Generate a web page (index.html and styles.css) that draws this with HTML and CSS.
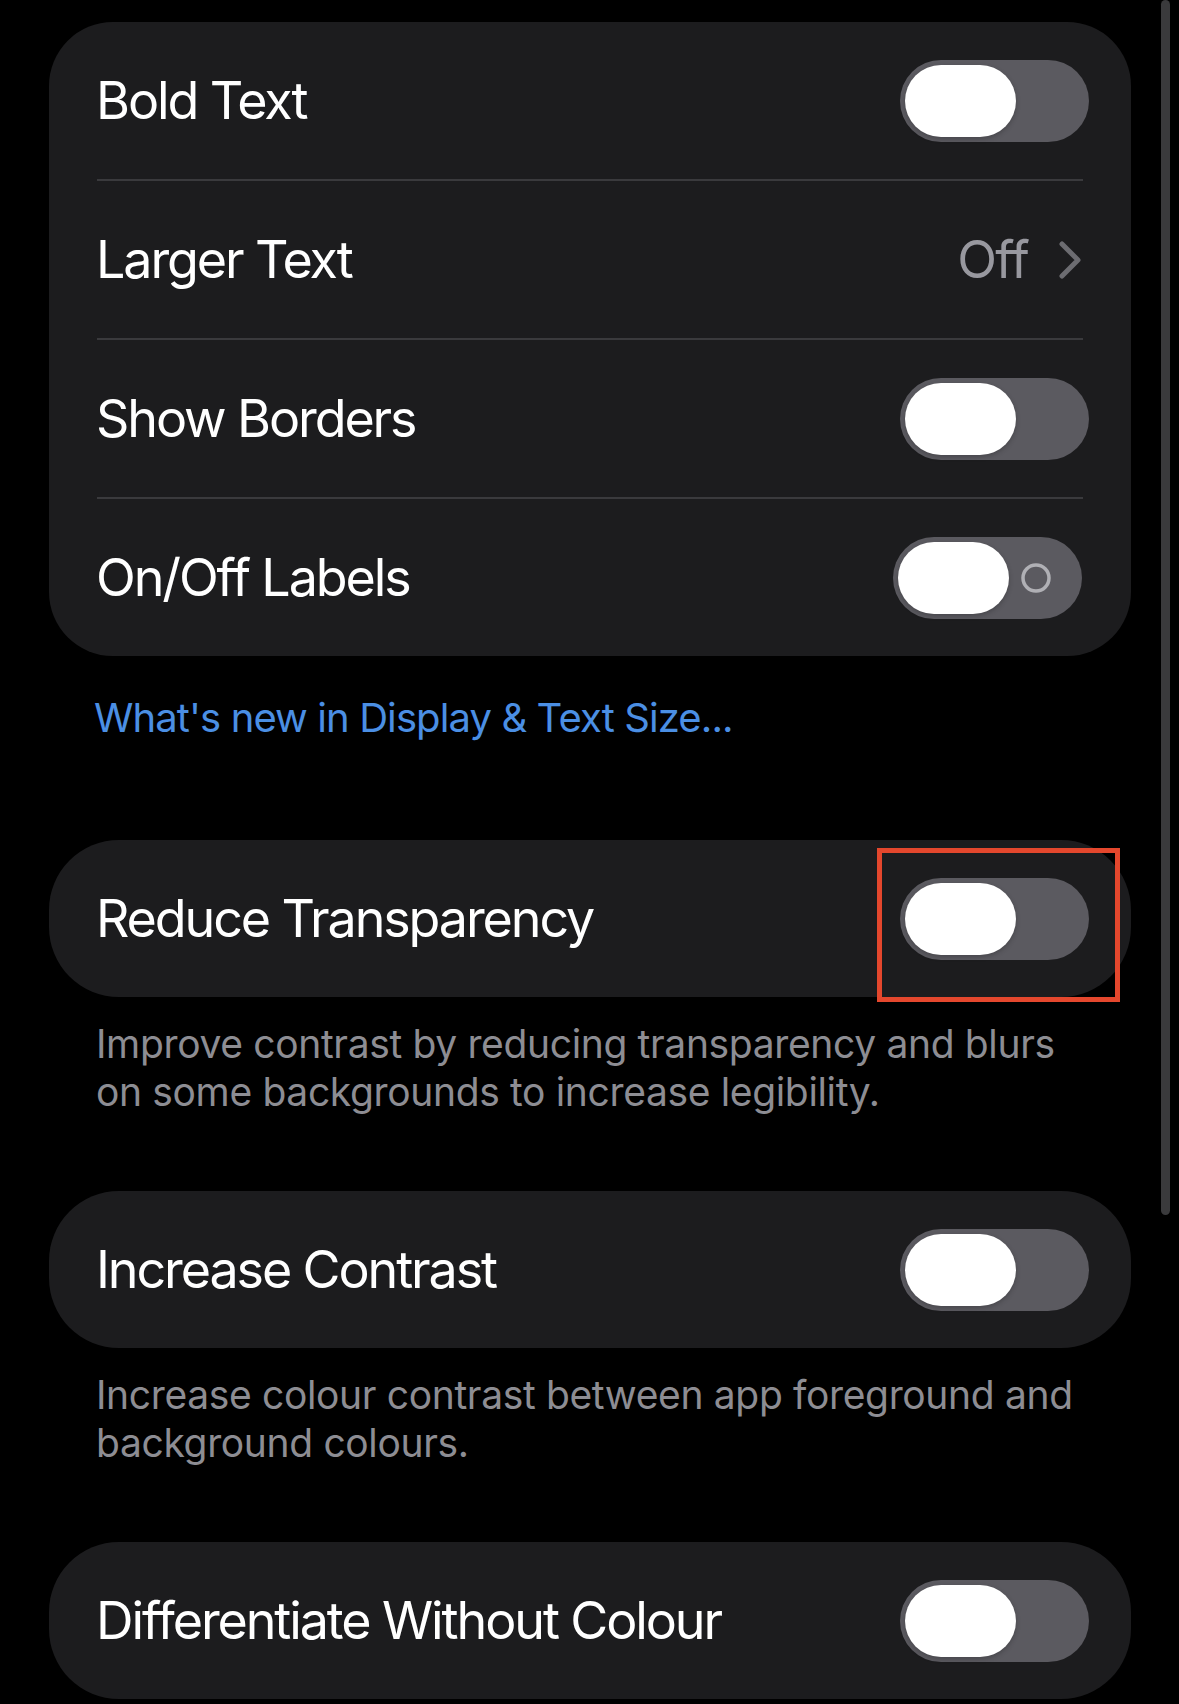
FILE: index.html
```html
<!DOCTYPE html>
<html lang="en">
<head>
<meta charset="utf-8">
<title>Display &amp; Text Size</title>
<link rel="stylesheet" href="styles.css">
</head>
<body>
<div class="screen">
  <div class="scrollbar"></div>
  <main class="page">
    <section class="card">
      <div class="row">
        <span class="label">Bold Text</span>
        <div class="toggle"><div class="knob"></div></div>
      </div>
      <div class="sep"></div>
      <div class="row">
        <span class="label">Larger Text</span>
        <div class="detail">
          <span class="value">Off</span>
          <svg class="chevron" width="22" height="38" viewBox="0 0 22 38"><polyline points="3,3 19,19 3,35" fill="none" stroke="#6c6c71" stroke-width="5" stroke-linecap="round" stroke-linejoin="round"/></svg>
        </div>
      </div>
      <div class="sep"></div>
      <div class="row">
        <span class="label">Show Borders</span>
        <div class="toggle"><div class="knob"></div></div>
      </div>
      <div class="sep"></div>
      <div class="row">
        <span class="label">On/Off Labels</span>
        <div class="toggle toggle-labels"><div class="knob"></div>
          <svg class="off-label" width="34" height="34" viewBox="0 0 34 34"><circle cx="17" cy="17" r="13" fill="none" stroke="#b0b0b5" stroke-width="3.5"/></svg>
        </div>
      </div>
    </section>

    <p class="link">What's new in Display &amp; Text Size...</p>

    <section class="card card-single highlighted">
      <div class="row">
        <span class="label">Reduce Transparency</span>
        <div class="toggle"><div class="knob"></div></div>
      </div>
      <div class="annotation"></div>
    </section>
    <p class="footnote">Improve contrast by reducing transparency and blurs on some backgrounds to increase legibility.</p>

    <section class="card card-single">
      <div class="row">
        <span class="label">Increase Contrast</span>
        <div class="toggle"><div class="knob"></div></div>
      </div>
    </section>
    <p class="footnote">Increase colour contrast between app foreground and background colours.</p>

    <section class="card card-single">
      <div class="row">
        <span class="label">Differentiate Without Colour</span>
        <div class="toggle"><div class="knob"></div></div>
      </div>
    </section>
  </main>
</div>
</body>
</html>
```

FILE: styles.css
```css
* { box-sizing: border-box; }

html, body {
  margin: 0;
  padding: 0;
  background: #000;
}

body {
  font-family: Inter, "Noto Sans", "Liberation Sans", sans-serif;
  color: #fff;
  width: 1179px;
  height: 1704px;
  overflow: hidden;
}

.screen {
  position: relative;
  width: 1179px;
  height: 1704px;
}

.scrollbar {
  position: absolute;
  left: 1161px;
  top: 0;
  width: 9px;
  height: 1215px;
  border-radius: 5px;
  background: #3a3a3c;
}

.page {
  padding: 22px 48px 0 49px;
  display: flex;
  flex-direction: column;
}

.card {
  background: #1c1c1e;
  border-radius: 64px;
  display: flex;
  flex-direction: column;
}

.card-single {
  border-radius: 70px;
}

.highlighted {
  position: relative;
  margin-top: 98px;
}

.row {
  height: 157px;
  display: flex;
  align-items: center;
  justify-content: space-between;
  padding: 0 42px 0 47px;
}

.label {
  font-size: 52px;
  letter-spacing: -2.1px;
  line-height: 1;
  white-space: nowrap;
}

.sep {
  height: 2px;
  margin: 0 48px;
  background: #3a3a3d;
}

.toggle {
  width: 189px;
  height: 82px;
  border-radius: 41px;
  background: #5b5a60;
  padding: 0 5px;
  display: flex;
  align-items: center;
  flex-shrink: 0;
}

.knob {
  width: 111px;
  height: 72px;
  border-radius: 36px;
  background: #fff;
  box-shadow: 0 2px 5px rgba(0, 0, 0, 0.22);
}

.toggle-labels {
  margin-right: 7px;
}

.off-label {
  margin-left: 10px;
  display: block;
}

.detail {
  display: flex;
  align-items: center;
  gap: 31px;
  margin-right: 8px;
}

.value {
  font-size: 52px;
  letter-spacing: -1.8px;
  line-height: 1;
  color: #98989f;
}

.chevron {
  display: block;
}

.link {
  margin: 38px 0 0 45px;
  font-size: 40px;
  line-height: 48px;
  letter-spacing: -0.9px;
  color: #4b8fe4;
}

.footnote {
  margin: 23px 0 75px 47px;
  padding-right: 40px;
  font-size: 39px;
  line-height: 48px;
  letter-spacing: -0.35px;
  color: #8d8d93;
}

.annotation {
  position: absolute;
  left: 828px;
  top: 8px;
  width: 243px;
  height: 154px;
  border: 5px solid #e4472d;
}
```
